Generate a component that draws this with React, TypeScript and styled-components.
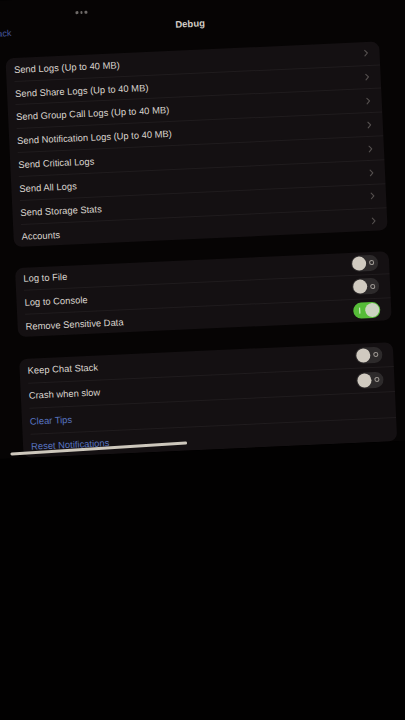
import React from 'react';
import styled, { createGlobalStyle } from 'styled-components';

const GlobalStyle = createGlobalStyle`
  html, body {
    margin: 0;
    padding: 0;
    background: #000;
    overflow: hidden;
  }
  * { box-sizing: border-box; }
`;

const Page = styled.div`
  width: 405px;
  height: 720px;
  overflow: hidden;
  background: #020101;
  font-family: "Liberation Sans", Arial, sans-serif;
`;

/* the photo is taken at a slight angle, so the whole screen is tilted */
const Screen = styled.div`
  position: relative;
  width: 440px;
  height: 458px;
  margin-left: -20px;
  padding-left: 20px;
  background: #060404;
  overflow: hidden;
  transform: rotate(-2.6deg);
  transform-origin: 35px 70px;
  display: flex;
  flex-direction: column;
`;

const TopStrip = styled.div`
  height: 23px;
  padding-top: 14px;
  padding-left: 78px;
  display: flex;
  gap: 2px;
`;

const Dot = styled.span`
  width: 2.5px;
  height: 2.5px;
  border-radius: 50%;
  background: #6e6a68;
`;

const NavBar = styled.div`
  position: relative;
  height: 18px;
  width: 390px;
  display: flex;
  align-items: center;
  justify-content: center;
`;

const BackButton = styled.span`
  position: absolute;
  left: -7px;
  top: 5px;
  font-size: 9px;
  color: #44559c;
`;

const Title = styled.span`
  font-size: 9.5px;
  font-weight: 700;
  color: #d2ccc6;
  margin-left: -6px;
`;

const Card = styled.div<{ $top: number }>`
  margin-top: ${p => p.$top}px;
  margin-left: 6px;
  width: 374px;
  background: #141012;
  border-radius: 8px;
  overflow: hidden;
`;

const Row = styled.div<{ $h: number; $last?: boolean }>`
  height: ${p => p.$h}px;
  margin-left: 8px;
  padding-right: 11px;
  display: flex;
  align-items: center;
  justify-content: space-between;
  border-bottom: ${p => (p.$last ? 'none' : '0.6px solid #201c1e')};
`;

const Label = styled.span<{ $link?: boolean }>`
  font-size: 9.4px;
  color: ${p => (p.$link ? '#5874c0' : '#dad4ce')};
  white-space: nowrap;
`;

const Track = styled.div<{ $on: boolean }>`
  position: relative;
  width: 27px;
  height: 16px;
  border-radius: 8px;
  background: ${p => (p.$on ? '#56bc38' : '#2d2a2b')};
`;

const Knob = styled.div<{ $on: boolean }>`
  position: absolute;
  top: 1px;
  left: ${p => (p.$on ? '12px' : '1px')};
  width: 14px;
  height: 14px;
  border-radius: 50%;
  background: ${p => (p.$on ? '#cbd3c0' : '#d0cac0')};
`;

const OffMark = styled.div`
  position: absolute;
  right: 4px;
  top: 5.5px;
  width: 5px;
  height: 5px;
  border-radius: 50%;
  border: 1px solid #9c9792;
`;

const OnMark = styled.div`
  position: absolute;
  left: 6px;
  top: 5px;
  width: 1px;
  height: 6px;
  background: #e0eed8;
`;

const HomeIndicator = styled.div`
  position: absolute;
  left: 13px;
  bottom: 4px;
  width: 177px;
  height: 2.5px;
  border-radius: 2px;
  background: #cdc7bc;
  transform: rotate(-1deg);
  transform-origin: left center;
`;

const Chevron = () => (
  <svg width="5" height="8" viewBox="0 0 5 8">
    <polyline points="1.2,1.2 3.8,4 1.2,6.8" fill="none" stroke="#55504f" strokeWidth="1.1" strokeLinecap="round" strokeLinejoin="round" />
  </svg>
);

const Toggle: React.FC<{ on: boolean }> = ({ on }) => (
  <Track $on={on}>
    {on ? <OnMark /> : <OffMark />}
    <Knob $on={on} />
  </Track>
);

const sendRows = [
  'Send Logs (Up to 40 MB)',
  'Send Share Logs (Up to 40 MB)',
  'Send Group Call Logs (Up to 40 MB)',
  'Send Notification Logs (Up to 40 MB)',
  'Send Critical Logs',
  'Send All Logs',
  'Send Storage Stats',
  'Accounts',
];

const logRows = [
  { title: 'Log to File', on: false },
  { title: 'Log to Console', on: false },
  { title: 'Remove Sensitive Data', on: true },
];

export default function App() {
  return (
    <Page>
      <GlobalStyle />
      <Screen>
        <TopStrip>
          <Dot />
          <Dot />
          <Dot />
        </TopStrip>
        <NavBar>
          <BackButton>Back</BackButton>
          <Title>Debug</Title>
        </NavBar>

        <Card $top={17}>
          {sendRows.map((t, i) => (
            <Row key={t} $h={23.9} $last={i === sendRows.length - 1}>
              <Label>{t}</Label>
              <Chevron />
            </Row>
          ))}
        </Card>

        <Card $top={21}>
          {logRows.map((r, i) => (
            <Row key={r.title} $h={23.5} $last={i === logRows.length - 1}>
              <Label>{r.title}</Label>
              <Toggle on={r.on} />
            </Row>
          ))}
        </Card>

        <Card $top={22}>
          <Row $h={24.5}>
            <Label>Keep Chat Stack</Label>
            <Toggle on={false} />
          </Row>
          <Row $h={25}>
            <Label>Crash when slow</Label>
            <Toggle on={false} />
          </Row>
          <Row $h={26}>
            <Label $link>Clear Tips</Label>
          </Row>
          <Row $h={24.5} $last>
            <Label $link>Reset Notifications</Label>
          </Row>
        </Card>

        <HomeIndicator />
      </Screen>
    </Page>
  );
}
